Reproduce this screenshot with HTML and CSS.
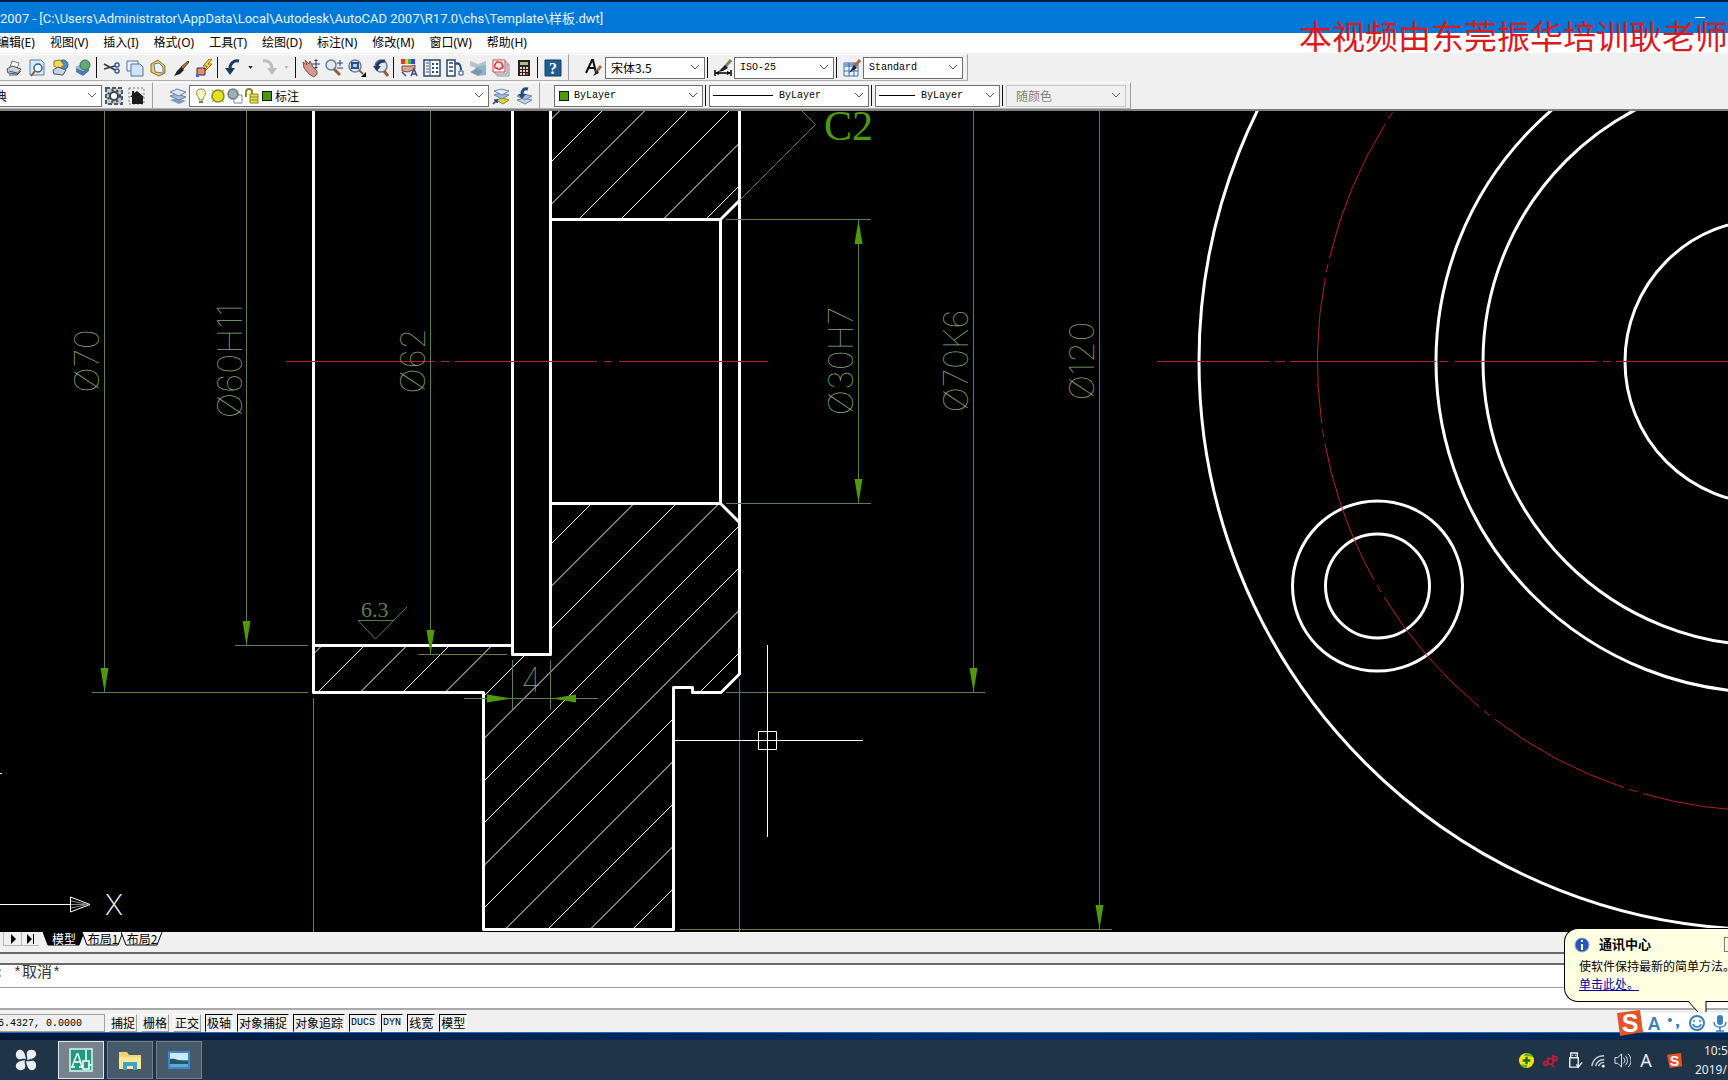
FILE: index.html
```html
<!doctype html>
<html lang="zh-CN">
<head>
<meta charset="UTF-8">
<title>AutoCAD 2007</title>
<link rel="stylesheet" href="styles.css">
</head>
<body>
	<header class="titlebar">
		<h1>2007 - [C:\Users\Administrator\AppData\Local\Autodesk\AutoCAD 2007\R17.0\chs\Template\样板.dwt]</h1>
		<button class="minimize" aria-label="最小化"></button>
	</header>
	<nav class="menubar">
		<button>编辑(E)</button>
		<button>视图(V)</button>
		<button>插入(I)</button>
		<button>格式(O)</button>
		<button>工具(T)</button>
		<button>绘图(D)</button>
		<button>标注(N)</button>
		<button>修改(M)</button>
		<button>窗口(W)</button>
		<button>帮助(H)</button>
	</nav>
	<div class="toolbars">
		<div class="toolrow">
			<div class="band band-standard">
				<button class="tool" aria-label="打印"><svg viewBox="0 0 18 18"><path d="M5 8L7 2l7 2-2 6z" fill="#fff" stroke="#777"/><path d="M2 10l5-3 9 3-4 5-9-1z" fill="#c9d3df" stroke="#4a525c"/><path d="M4 12l8 2M4 16h8l4-4" stroke="#4a525c" fill="none"/></svg></button>
				<button class="tool" aria-label="打印预览"><svg viewBox="0 0 18 18"><path d="M2 1h11l3 3v12H2z" fill="#dbe9f8" stroke="#5b82ab"/><circle cx="10" cy="9" r="4" fill="#eef8ff" stroke="#3d5d80" stroke-width="1.5"/><path d="M7 12l-4 5" stroke="#8c5a2b" stroke-width="2"/></svg></button>
				<button class="tool" aria-label="发布"><svg viewBox="0 0 18 18"><circle cx="12" cy="6" r="5" fill="#4f8fc4" stroke="#2d5d88"/><path d="M3 2l6-1 4 5-5 4-5-3z" fill="#f5d84e" stroke="#9a7b12"/><path d="M2 11l5-3 8 3-3 5-9-1z" fill="#c9d3df" stroke="#4a525c"/></svg></button>
				<button class="tool" aria-label="三维 DWF"><svg viewBox="0 0 18 18"><path d="M1 8l7-3 6 3-6 4z" fill="#8cb4d8"/><circle cx="11" cy="6" r="5" fill="#63ad6a" stroke="#396e7e"/><path d="M2 9v4l7 4 6-5V8l-6 4z" fill="#4c7cae"/></svg></button>
				<span class="sep"></span>
				<button class="tool" aria-label="剪切"><svg viewBox="0 0 18 18"><path d="M1 5l11 6M1 10l11-3" stroke="#333a44" stroke-width="1.5"/><circle cx="14" cy="6" r="2" fill="none" stroke="#3b5b8c" stroke-width="1.5"/><circle cx="14" cy="12" r="2" fill="none" stroke="#3b5b8c" stroke-width="1.5"/></svg></button>
				<button class="tool" aria-label="复制"><svg viewBox="0 0 18 18"><path d="M1 2h11v10H1z" fill="#eaf4ff" stroke="#4b7aa5"/><path d="M5 5h9l3 3v9H5z" fill="#cfe4f8" stroke="#4b7aa5"/></svg></button>
				<button class="tool" aria-label="粘贴"><svg viewBox="0 0 18 18"><path d="M2 5l7-4 7 6v7l-6 3-8-4z" fill="#f0cf62" stroke="#8b6d24"/><path d="M5 5l5-1 4 4v6l-8-1z" fill="#eaf1f8" stroke="#6a7d92"/></svg></button>
				<button class="tool" aria-label="特性匹配"><svg viewBox="0 0 18 18"><path d="M16 2l-7 6 2 2 6-7z" fill="#b77a43" stroke="#55351a"/><path d="M9 8l3 3-4 4-6 2 3-5z" fill="#222"/></svg></button>
				<button class="tool" aria-label="块编辑器"><svg viewBox="0 0 18 18"><path d="M14 0L8 7h4l-3 6 8-8h-4l4-5z" fill="#ffd13a" stroke="#a06a10"/><path d="M2 9h8v7H2z" fill="#f28a5c" stroke="#1c2f66"/><path d="M1 15h3v3H1z" fill="#3b6bd1"/></svg></button>
				<span class="sep"></span>
				<button class="tool" aria-label="放弃"><svg viewBox="0 0 18 18"><path d="M15 2C10 1 6 4 6 10" fill="none" stroke="#1f3866" stroke-width="3"/><path d="M1 9h10l-5 7z" fill="#1f3866"/></svg></button>
				<button class="drop" aria-label="放弃列表"><svg viewBox="0 0 6 4"><path d="M0 0h6L3 4z" fill="#222"/></svg></button>
				<button class="tool" aria-label="重做"><svg viewBox="0 0 18 18"><path d="M3 2c5-1 9 2 9 8" fill="none" stroke="#bdbdbd" stroke-width="3"/><path d="M7 9h10l-5 7z" fill="#bdbdbd"/></svg></button>
				<button class="drop" aria-label="重做列表"><svg viewBox="0 0 6 4"><path d="M0 0h6L3 4z" fill="#bbb"/></svg></button>
				<span class="sep"></span>
				<button class="tool" aria-label="实时平移"><svg viewBox="0 0 18 18"><path d="M1 3l4 3-2-5 4 4 1-3 3 6 4 4v3l-3 3-5-3-5-6z" fill="#d59a8f" stroke="#8b4a43"/><path d="M14 1v8M10 5h8" stroke="#23406f"/><path d="M14 0l2 2h-4zM14 10l2-2h-4z" fill="#23406f"/></svg></button>
				<button class="tool" aria-label="实时缩放"><svg viewBox="0 0 18 18"><circle cx="6" cy="6" r="5" fill="#dceaf6" stroke="#6d7f91" stroke-width="1.5"/><path d="M9 10l6 6" stroke="#9b5c34" stroke-width="3"/><path d="M15 1v6M12 4h6M12 9h6" stroke="#23406f"/></svg></button>
				<button class="tool" aria-label="窗口缩放"><svg viewBox="0 0 18 18"><circle cx="7" cy="7" r="6" fill="#dceaf6" stroke="#6d7f91" stroke-width="1.5"/><path d="M4 4h6v5H4z" fill="#b8cbea" stroke="#23509e" stroke-width="2"/><path d="M11 11l4 4" stroke="#9b5c34" stroke-width="2"/><path d="M18 13v5h-5z" fill="#000"/></svg></button>
				<button class="tool" aria-label="缩放上一个"><svg viewBox="0 0 18 18"><circle cx="10" cy="7" r="6" fill="#dceaf6" stroke="#6d7f91" stroke-width="1.5"/><path d="M14 2C9 2 6 4 6 8" fill="none" stroke="#1f3866" stroke-width="3"/><path d="M2 7h8l-4 5z" fill="#1f3866"/><path d="M13 12l4 5" stroke="#9b5c34" stroke-width="3"/></svg></button>
				<span class="sep"></span>
				<button class="tool" aria-label="特性"><svg viewBox="0 0 18 18"><path d="M1 0h4v5H1z" fill="#e33"/><path d="M5 0h3v5H5z" fill="#fc3"/><path d="M8 0h3v5H8z" fill="#3b5"/><path d="M11 0h4v5h-4z" fill="#34e"/><path d="M2 7h9l4-1v4l-7 3-6-1z" fill="#d8a58e" stroke="#7a4a3a"/><path d="M2 13l4 4M11 17l3-7 3 7M12 15h4" fill="none" stroke="#34527f" stroke-width="1.5"/></svg></button>
				<button class="tool" aria-label="设计中心"><svg viewBox="0 0 18 18"><path d="M1 1h16v16H1z" fill="#fff" stroke="#24487c" stroke-width="1.5"/><path d="M7 1v16" stroke="#24487c"/><path d="M3 4h3M3 7h3M3 10h3M3 13h3" stroke="#24487c"/><path d="M9 4h2v2H9zM13 4h2v2h-2zM9 8h2v2H9zM13 8h2v2h-2zM9 12h2v2H9zM13 12h2v2h-2z" fill="#24487c"/></svg></button>
				<button class="tool" aria-label="工具选项板"><svg viewBox="0 0 18 18"><path d="M1 1h8v16H1z" fill="#fff" stroke="#24487c" stroke-width="1.5"/><path d="M3 4h4M3 8h4M3 12h4" stroke="#24487c" stroke-width="1.5"/><path d="M9 5c4-2 6 1 6 6" fill="none" stroke="#24487c" stroke-width="2"/><path d="M13 12h4v4h-4z" fill="#fff" stroke="#24487c"/></svg></button>
				<button class="tool" aria-label="图纸集"><svg viewBox="0 0 18 18"><path d="M1 2l8 3 8-3v6l-7 2-9-3z" fill="#b9c3ca"/><path d="M6 8l11-2v10l-9 1z" fill="#8fb3c9"/><path d="M1 13l7-4 6 3-5 5z" fill="#7d97a8"/></svg></button>
				<button class="tool" aria-label="标记集"><svg viewBox="0 0 18 18"><path d="M5 5h12v12H5z" fill="#ddd" stroke="#999"/><path d="M3 3h12v12H3z" fill="#eee" stroke="#999"/><path d="M1 1h12v12H1z" fill="#fff" stroke="#c44"/><path d="M4 4c1-2 3-1 3 0 1-2 4 0 3 2 2 1 1 4-1 3-1 2-3 2-4 0-3 1-3-3-1-5z" fill="#fbe3e3" stroke="#d2333b" stroke-width="1.5"/></svg></button>
				<button class="tool" aria-label="计算器"><svg viewBox="0 0 18 18"><path d="M3 1h12v16H3z" fill="#2a1f22"/><path d="M5 3h8v3H5z" fill="#9fc08c"/><path d="M5 8h2v2H5zM8 8h2v2H8zM11 8h2v2h-2zM5 11h2v2H5zM8 11h2v2H8zM11 11h2v2h-2zM5 14h2v2H5zM8 14h2v2H8z" fill="#e3cfd0"/><path d="M11 14h2v2h-2z" fill="#d33"/></svg></button>
				<span class="sep"></span>
				<button class="tool" aria-label="帮助"><svg viewBox="0 0 18 18"><path d="M1 1h16v16H1z" fill="#1f5c93" stroke="#163f66"/><text x="9" y="15" class="glyph-help">?</text></svg></button>
			</div>
			<div class="band band-styles">
				<button class="tool" aria-label="文字样式"><svg viewBox="0 0 18 18"><path d="M1 14L7 1h1l3 13M4 9h6" fill="none" stroke="#111" stroke-width="2"/><path d="M16 7l-5 6" stroke="#a86c4b" stroke-width="3"/><path d="M12 11l2 3-6 3z" fill="#222"/></svg></button>
				<select class="combo combo-style cjk" aria-label="文字样式"><option>宋体3.5</option></select>
				<span class="sep"></span>
				<button class="tool" aria-label="标注样式"><svg viewBox="0 0 18 18"><path d="M17 1l-6 7" stroke="#6c8c5e" stroke-width="3"/><path d="M11 6l3 3-5 3-5 1z" fill="#222"/><path d="M1 11v6M17 11v6M2 14h14" stroke="#000" stroke-width="1.5"/><path d="M1 14l4-2v4zM17 14l-4-2v4z"/></svg></button>
				<select class="combo combo-style" aria-label="标注样式"><option>ISO-25</option></select>
				<span class="sep"></span>
				<button class="tool" aria-label="表格样式"><svg viewBox="0 0 18 18"><path d="M1 4h14v13H1z" fill="#eef5ff" stroke="#3d6cab"/><path d="M1 4h14v4H1z" fill="#7ba2d8"/><path d="M1 12h14M6 4v13M11 4v13" stroke="#3d6cab"/><path d="M17 1l-6 7" stroke="#a86c4b" stroke-width="3"/><path d="M11 6l3 3-8 5z" fill="#222"/></svg></button>
				<select class="combo combo-style" aria-label="表格样式"><option>Standard</option></select>
			</div>
		</div>
		<div class="toolrow">
			<div class="band">
				<select class="combo combo-workspace cjk" aria-label="工作空间"><option>典</option></select>
				<button class="tool" aria-label="工作空间设置"><svg viewBox="0 0 18 18"><path d="M1 1h16v16H1z" fill="#c3cbd3" stroke="#4e5a66" stroke-dasharray="4 2" stroke-width="2"/><circle cx="9" cy="9" r="4" fill="#fff" stroke="#39444f" stroke-width="2"/><circle cx="9" cy="9" r="6" fill="none" stroke="#39444f" stroke-width="2" stroke-dasharray="2 3"/></svg></button>
				<button class="tool" aria-label="我的工作空间"><svg viewBox="0 0 18 18"><path d="M1 1h15v16H1z" fill="none" stroke="#777" stroke-dasharray="2 2"/><path d="M2 10l2-2V4h2v2l3-2 7 6h-1v7H4v-7z" fill="#1c1c1c"/></svg></button>
			</div>
			<div class="band band-layers">
				<button class="tool" aria-label="图层特性管理器"><svg viewBox="0 0 18 18"><path d="M1 13l7-2 9 3-7 3z" fill="#7f9cc0"/><path d="M1 9l7-2 9 3-7 3z" fill="#a7bdd8" stroke="#6482a8"/><path d="M1 5l7-3 9 3-7 4z" fill="#dde8f4" stroke="#6482a8"/></svg></button>
				<div class="layer-combo">
					<select class="combo combo-layer cjk" aria-label="图层"><option>标注</option></select>
					<span class="layer-state">
						<svg viewBox="0 0 16 16"><path d="M8 1c6 0 5 6 2 9v2H6v-2C3 7 2 1 8 1z" fill="#fffbc8" stroke="#8d8a3c"/><path d="M6 13h4v2H6z" fill="#777"/></svg>
						<svg viewBox="0 0 16 16"><circle cx="8" cy="8" r="6" fill="#e6e21e" stroke="#8a8a20" stroke-width="1.5"/><path d="M2 2l2 2M14 2l-2 2M2 14l2-2M14 14l-2-2" stroke="#8a8a20"/></svg>
						<svg viewBox="0 0 16 16"><path d="M7 7h8v8H7z" fill="#fff" stroke="#7a8a94"/><circle cx="6" cy="6" r="5" fill="#9db0b4" stroke="#6b7d84" stroke-width="1.5"/></svg>
						<svg viewBox="0 0 16 16"><path d="M2 9V4c0-4 6-4 6 0v3" fill="none" stroke="#8d8a1c" stroke-width="2"/><path d="M6 6h8v9H6z" fill="#e8e04a" stroke="#8d8a1c"/><path d="M6 9h8M6 12h8" stroke="#8d8a1c"/></svg>
						<i class="swatch"></i>
					</span>
				</div>
				<button class="tool" aria-label="置为当前图层"><svg viewBox="0 0 18 18"><path d="M4 13l6-2 7 2-6 4z" fill="#e1d433" stroke="#8a8420"/><path d="M2 8l7-2 8 2-7 4z" fill="#a7bdd8" stroke="#6482a8"/><path d="M2 4l7-2 8 2-7 4z" fill="#e8eef5" stroke="#6482a8"/><path d="M1 17l4-4M2 13h3v3" fill="none" stroke="#223c8a" stroke-width="1.5"/></svg></button>
				<button class="tool" aria-label="上一个图层"><svg viewBox="0 0 18 18"><path d="M2 13l7-2 8 2-7 4z" fill="#c9d6e6" stroke="#6482a8"/><path d="M2 9l7-2 8 2-7 4z" fill="#a7bdd8" stroke="#6482a8"/><path d="M13 2C9 1 7 3 7 7" fill="none" stroke="#294b7c" stroke-width="3"/><path d="M3 7h8l-4 5z" fill="#294b7c"/></svg></button>
			</div>
			<div class="band band-props">
				<div class="layer-combo">
					<select class="combo combo-color" aria-label="颜色"><option>ByLayer</option></select>
					<span class="layer-state"><i class="swatch"></i></span>
				</div>
				<span class="sep"></span>
				<div class="layer-combo">
					<select class="combo combo-linetype" aria-label="线型"><option>ByLayer</option></select>
					<span class="layer-state"><i class="sample sample-long"></i></span>
				</div>
				<span class="sep"></span>
				<div class="layer-combo">
					<select class="combo combo-weight" aria-label="线宽"><option>ByLayer</option></select>
					<span class="layer-state"><i class="sample"></i></span>
				</div>
				<span class="sep"></span>
				<select class="combo combo-plot cjk" aria-label="打印样式" disabled><option>随颜色</option></select>
			</div>
		</div>
	</div>

	<main class="drawing">
		<svg class="canvas" viewBox="0 111 1728 821" preserveAspectRatio="xMinYMin slice">
			<defs>
				<clipPath id="section">
					<path d="M550 111H739V200L720 219H550zM313 645H512V654H550V503H720L739 522V674L721 692H693V687H673V929H483V692H313z"/>
				</clipPath>
				<!-- tip at 0,0 pointing down -->
				<path id="arrow" d="M0 0L-4 -24H4z"/>
			</defs>

			<path class="hatch" clip-path="url(#section)" d="M-261.5 932l821-821M-219 932l821-821M-176.5 932l821-821M-134 932l821-821M-92 932l821-821M-49.5 932l821-821M-7 932l821-821M35.5 932l821-821M78 932l821-821M120.5 932l821-821M163 932l821-821M205.5 932l821-821M248 932l821-821M290.5 932l821-821M333 932l821-821M375 932l821-821M417.5 932l821-821M460 932l821-821M502.5 932l821-821M545 932l821-821M587.5 932l821-821M630 932l821-821"/>

			<!-- section outline -->
			<g class="outline">
				<path d="M313.5 111V692.5H483.5V929.5H673.5V687.5H692.5V692.5H721L739.5 674V111"/>
				<path d="M313.5 645.5H512.5M512.5 111V654.5H550.5V111"/>
				<path d="M550.5 219.5H720.5V503.5H550.5M720.5 219.5L739.5 200.5M720.5 503.5L739.5 522.5"/>
			</g>

			<!-- front view -->
			<g class="outline">
				<circle cx="1767" cy="361.5" r="568"/>
				<circle cx="1767" cy="361.5" r="331"/>
				<circle cx="1767" cy="361.5" r="284"/>
				<circle cx="1767" cy="361.5" r="142"/>
				<circle cx="1377.5" cy="586" r="85"/>
				<circle cx="1377.5" cy="586" r="52"/>
			</g>

			<g class="center">
				<path d="M286 361.5H435M441 361.5H449M455 361.5H597M604 361.5H612M619 361.5H768"/>
				<path d="M1157 361.5H1270M1275 361.5H1285M1290 361.5H1436M1440 361.5H1448M1455 361.5H1597M1603 361.5H1611M1616 361.5H1728"/>
				<path class="pitch" d="M1504.7 -3.6A449.5 449.5 0 0 0 1767 811"/>
			</g>

			<g class="dim">
				<path d="M104.5 111V692M92 692.5H308"/>
				<path d="M246.5 111V645M235 645.5H308"/>
				<path d="M430.5 111V654M418 654.5H507"/>
				<path d="M858.5 219V503M726 219.5H871M726 503.5H871"/>
				<path d="M973.5 111V692M726 692.5H985"/>
				<path d="M1099.5 111V929M680 929.5H1112"/>
				<path d="M313.5 698V932M739.5 679V932"/>
				<path d="M512.5 660V710M550.5 660V710M464 698.5H598"/>
				<path d="M740 200L815.5 124.5L802 111"/>
				<path d="M358 620.5H394M358 620.5L375.5 639L407 607"/>
			</g>
			<g class="arrows">
				<use href="#arrow" x="104.5" y="692"/>
				<use href="#arrow" x="246.5" y="645"/>
				<use href="#arrow" x="430.5" y="654"/>
				<use href="#arrow" x="858.5" y="503"/>
				<use href="#arrow" transform="translate(858.5 220) rotate(180)"/>
				<use href="#arrow" x="973.5" y="692"/>
				<use href="#arrow" x="1099.5" y="929"/>
				<use href="#arrow" transform="translate(511 698.5) rotate(-90)"/>
				<use href="#arrow" transform="translate(552 698.5) rotate(90)"/>
			</g>
			<g class="dimtext">
				<text transform="translate(99 361) rotate(-90)">Ø70</text>
				<text transform="translate(242 361) rotate(-90)">Ø60H11</text>
				<text transform="translate(425 361) rotate(-90)">Ø62</text>
				<text transform="translate(853 361) rotate(-90)">Ø30H7</text>
				<text transform="translate(968 361) rotate(-90)">Ø70K6</text>
				<text transform="translate(1094 361) rotate(-90)">Ø120</text>
				<text x="531" y="692">4</text>
			</g>
			<text class="note" x="824" y="140">C2</text>
			<text class="rough" x="361" y="617">6.3</text>

			<!-- UCS icon -->
			<g class="ucs">
				<path d="M0 904.5H70M0 773.5H2M70.5 897V912L90 904.5z"/>
				<path class="ucs-shade" d="M71 901L88 904.5L71 908M71 904.5H88"/>
				<text x="114" y="915">X</text>
			</g>

			<path class="cursor" d="M767.5 645V837M672 740.5H863M758.5 731.5H776.5V749.5H758.5z"/>
		</svg>
	</main>

	<div class="tabs">
		<button class="tab-nav" aria-label="下一个"><svg viewBox="0 0 8 10"><path d="M2 0l5 5-5 5z"/></svg></button>
		<button class="tab-nav" aria-label="最后一个"><svg viewBox="0 0 8 10"><path d="M0 0l5 5-5 5zM6 0h1v10H6z"/></svg></button>
		<button class="tab active"><svg viewBox="0 0 42 14"><path d="M0 0l5 13h31l5-13"/></svg><span>模型</span></button>
		<button class="tab"><svg viewBox="0 0 42 14"><path d="M0 0l5 13h31l5-13"/></svg><span>布局1</span></button>
		<button class="tab"><svg viewBox="0 0 42 14"><path d="M0 0l5 13h31l5-13"/></svg><span>布局2</span></button>
	</div>
	<div class="splitter"></div>
	<div class="history">: *取消*</div>
	<input class="command" type="text" aria-label="命令">

	<footer class="status">
		<output class="coords">5.4327, 0.0000</output>
		<button class="mode">捕捉</button>
		<button class="mode">栅格</button>
		<button class="mode">正交</button>
		<button class="mode on">极轴</button>
		<button class="mode on">对象捕捉</button>
		<button class="mode on">对象追踪</button>
		<button class="mode on latin">DUCS</button>
		<button class="mode on latin">DYN</button>
		<button class="mode on">线宽</button>
		<button class="mode on">模型</button>
	</footer>
	<div class="desktop-edge"></div>

	<div class="taskbar">
		<button class="start" aria-label="开始"><svg viewBox="0 0 22 22"><g fill="#e9eff4"><path d="M11 10C10 4 8 0 4 1 0 2 0 8 3 10c3 1 4-1 8 0z"/><path d="M12 11c6-1 10-3 9-7-1-4-7-4-9-1-1 3 1 4 0 8z"/><path d="M11 12c1 6 3 10 7 9 4-1 4-7 1-9-3-1-4 1-8 0z"/><path d="M10 11c-6 1-10 3-9 7 1 4 7 4 9 1 1-3-1-4 0-8z"/></g></svg></button>
		<button class="task current" aria-label="AutoCAD"><svg viewBox="0 0 24 24"><path d="M1 1h22v22H1z" fill="#1f9b83" stroke="#dff3ee" stroke-width="1.5"/><path d="M2 19h4M3 19L8 6h1l4 13h-3M5 14h6M17 2v11M14 13h6v8h-6zM20 17h3" fill="none" stroke="#fff" stroke-width="1.5"/></svg></button>
		<button class="task" aria-label="文件资源管理器"><svg viewBox="0 0 24 24"><path d="M1 4h8l2 3h12v14H1z" fill="#f6d36b"/><path d="M1 9h22v12H1z" fill="#fbe596"/><path d="M5 22v-8h14v8h-4v-4H9v4z" fill="#3da4c7"/></svg></button>
		<button class="task" aria-label="照片查看器"><svg viewBox="0 0 24 24"><path d="M1 3h22v18H1z" fill="#3f86c9"/><path d="M3 5h18v7H3z" fill="#cfe9fb"/><path d="M3 11c6-1 9 3 18 2v6H3z" fill="#1f5a63"/><path d="M3 16h18v3H3z" fill="#5fa9d4"/></svg></button>
		<div class="tray">
			<button aria-label="安全卫士"><svg viewBox="0 0 18 18"><circle cx="9" cy="9" r="8" fill="#f2e21a"/><path d="M9 1a8 8 0 0 1 7 4L6 4zM9 17a8 8 0 0 1-7-4l8 1z" fill="#5cae2c"/><path d="M9 5v8M5 9h8" stroke="#167016" stroke-width="2.5"/></svg></button>
			<button aria-label="同步"><svg viewBox="0 0 18 18"><g fill="none" stroke="#b3203f" stroke-width="2"><circle cx="9" cy="10" r="3"/><circle cx="4" cy="12" r="2"/><circle cx="14" cy="7" r="2"/><path d="M5 6l3 1M12 3l-1 3M11 14l2 2"/></g></svg></button>
			<button aria-label="安全删除硬件"><svg viewBox="0 0 18 18"><path d="M5 6V1h7v5M4 6h9v10H4zM7 3v1M10 3v1" fill="none" stroke="#e8edf1" stroke-width="1.5"/><path d="M11 13l2 3 4-5" fill="none" stroke="#e8edf1" stroke-width="1.5"/></svg></button>
			<button aria-label="无线网络"><svg viewBox="0 0 18 18"><path d="M2 15C3 8 8 4 15 4M6 15c1-4 4-7 9-7M9 15c1-2 3-4 6-4" fill="none" stroke="#c4ced6" stroke-width="1.5"/><circle cx="14" cy="15" r="1.5" fill="#fff"/></svg></button>
			<button aria-label="音量"><svg viewBox="0 0 18 18"><path d="M1 6h3l4-4v14l-4-4H1zM10 6c2 2 2 4 0 6M12 4c3 3 3 7 0 10M15 2c4 4 4 10 0 14" fill="none" stroke="#e8edf1"/></svg></button>
			<button class="ime">A</button>
			<button aria-label="搜狗输入法"><svg viewBox="0 0 18 18"><path d="M1 3l15-2 1 14-13 2z" fill="#e5532a"/><text x="9" y="15" class="glyph-s">S</text></svg></button>
			<div class="clock"><span class="time">10:5</span><span>2019/</span></div>
		</div>
	</div>

	<aside class="balloon">
		<svg class="info" viewBox="0 0 16 16"><circle cx="8" cy="8" r="7" fill="#2b55b4" stroke="#8fa6d6"/><path d="M7 7h2v6H7zM7 3h2v2H7z" fill="#fff"/></svg>
		<h2>通讯中心</h2>
		<button class="balloon-close" aria-label="关闭"></button>
		<p>使软件保持最新的简单方法。<br><a href="#">单击此处。</a></p>
		<svg class="tail" viewBox="0 0 20 13"><path d="M0 0H18V12H10z" fill="#ffffe1"/><path d="M0 1L10 12M18 1V12" fill="none" stroke="#000"/></svg>
	</aside>

	<div class="ime-bar">
		<svg class="ime-logo" viewBox="0 0 28 28"><path d="M1 4l23-3 3 22-23 4z" fill="#e5532a"/><text x="14" y="23" class="glyph-s-big">S</text></svg>
		<span class="ime-mode">A</span>
		<svg viewBox="0 0 18 18"><circle cx="5" cy="6" r="2" fill="#3a7fb8"/><path d="M11 10h3c1 3-1 5-3 5 1-1 1-2 0-5z" fill="#3a7fb8"/></svg>
		<svg viewBox="0 0 18 18"><circle cx="9" cy="9" r="7" fill="none" stroke="#3a7fb8" stroke-width="2"/><path d="M6 6v2M12 6v2M5 10c1 4 7 4 8 0" fill="none" stroke="#3a7fb8" stroke-width="1.5"/></svg>
		<svg viewBox="0 0 18 18"><rect x="6" y="1" width="6" height="10" rx="3" fill="#3a7fb8"/><path d="M3 8c0 7 12 7 12 0M9 13v4M5 17h8" fill="none" stroke="#3a7fb8" stroke-width="1.5"/></svg>
	</div>

	<div class="watermark">本视频由东莞振华培训耿老师</div>
</body>
</html>
```
FILE: styles.css
```css
* {
	box-sizing: border-box;
}
body {
	margin: 0;
	height: 100vh;
	display: flex;
	flex-direction: column;
	overflow: hidden;
	position: relative;
	background: #f0f0f0;
	color: #000;
	font-family: "Noto Sans", "Noto Sans CJK SC", sans-serif;
	font-size: 12px;
}
button {
	margin: 0;
	padding: 0;
	border: 0;
	background: none;
	color: inherit;
	font: inherit;
	flex: none;
}
svg {
	display: block;
}

/* title and menu */
.titlebar {
	flex: none;
	height: 33px;
	border-top: 2px solid #03204a;
	background: #0078d7;
	color: #e6f5ff;
	display: flex;
	align-items: center;
	justify-content: space-between;
	padding-right: 23px;
}
.titlebar h1 {
	margin: 0;
	font-family: Roboto, "Noto Sans CJK SC", sans-serif;
	font-size: 13px;
	font-weight: normal;
	white-space: nowrap;
}
.minimize {
	width: 10px;
	height: 1px;
	background: #fff;
}
.menubar {
	flex: none;
	height: 20px;
	background: #fff;
	display: flex;
	align-items: center;
	gap: 15px;
	overflow: hidden;
	margin-left: -3px;
}
.menubar button {
	white-space: nowrap;
	line-height: 18px;
}

/* toolbars */
.toolbars {
	flex: none;
	border-bottom: 2px solid #808080;
}
.toolrow {
	display: flex;
	height: 28px;
	padding-top: 1px;
}
.band {
	display: flex;
	align-items: center;
	padding-right: 4px;
	border-top: 1px solid #fff;
	border-right: 1px solid #a0a0a0;
	border-bottom: 1px solid #b0b0b0;
}
.band-standard {
	padding-left: 2px;
}
.band-styles {
	padding-left: 13px;
}
.band-layers {
	padding-left: 13px;
}
.band-props {
	padding-left: 14px;
}
.tool {
	width: 23px;
	height: 22px;
	display: flex;
	align-items: center;
	justify-content: center;
}
.tool svg {
	width: 18px;
	height: 18px;
}
.drop {
	width: 13px;
	height: 22px;
	display: flex;
	align-items: center;
	justify-content: center;
}
.drop svg {
	width: 5px;
	height: 3px;
}
.sep {
	flex: none;
	width: 6px;
	height: 21px;
	border-left: 2px solid transparent;
	border-right: 3px solid transparent;
	background: #111;
	background-clip: padding-box;
}
.combo {
	appearance: none;
	height: 22px;
	margin: 0;
	padding: 0 20px 0 5px;
	border: 1px solid #6f6f6f;
	border-radius: 0;
	background: #fff url("data:image/svg+xml,%3Csvg xmlns='http://www.w3.org/2000/svg' width='10' height='6'%3E%3Cpath d='M1 0l4 4 4-4' fill='none' stroke='%23555'/%3E%3C/svg%3E") no-repeat right 4px center;
	color: #000;
	font-family: "Liberation Mono", monospace;
	font-size: 10px;
}
.combo.cjk {
	font-family: "Noto Sans CJK SC", sans-serif;
	font-size: 12px;
}
.combo:disabled {
	border-color: #c8c8c8;
	background-color: #f0f0f0;
	color: #808080;
	opacity: 1;
	padding-left: 9px;
}
.combo-style {
	width: 100px;
}
.combo-workspace {
	width: 102px;
	border-left: 0;
	padding-left: 0;
	text-indent: -5px;
}
.combo-layer {
	width: 300px;
	padding-left: 85px;
}
.combo-color {
	width: 149px;
	padding-left: 19px;
}
.combo-linetype {
	width: 160px;
	padding-left: 69px;
}
.combo-weight {
	width: 125px;
	padding-left: 45px;
}
.combo-plot {
	width: 120px;
}
.layer-combo {
	display: grid;
	align-items: center;
}
.layer-combo > * {
	grid-area: 1 / 1;
}
.layer-state {
	display: flex;
	align-items: center;
	gap: 1px;
	padding-left: 4px;
	pointer-events: none;
}
.layer-state svg {
	width: 16px;
	height: 16px;
}
.swatch {
	width: 10px;
	height: 10px;
	margin-left: 1px;
	border: 1px solid #111;
	background: #4e9a06;
}
.sample {
	width: 36px;
	height: 1px;
	background: #000;
}
.sample-long {
	width: 60px;
}
.glyph-help {
	font: bold 16px "Liberation Serif", serif;
	fill: #fff;
	text-anchor: middle;
}

/* drawing area */
.drawing {
	flex: 1;
	min-height: 0;
	background: #000;
}
.canvas {
	width: 100%;
	height: 100%;
}
.canvas path,
.canvas circle {
	fill: none;
}
.outline {
	stroke: #fff;
	stroke-width: 3;
	stroke-linejoin: round;
}
.hatch {
	stroke: #fff;
	stroke-width: 1;
}
.center {
	stroke: #b5202c;
	stroke-width: 1;
}
.pitch {
	stroke-dasharray: 8 6 146 6;
	stroke-dashoffset: 4;
}
.dim {
	stroke: #5c7f4c;
	stroke-width: 1;
}
.arrows {
	fill: #4e9a0a;
}
.canvas #arrow {
	fill: inherit;
}
.dimtext {
	fill: #86a873;
	font: 100 34px Inter, "Noto Sans", sans-serif;
	text-anchor: middle;
}
.note {
	fill: #4e9a0a;
	font: 42px "Liberation Serif", serif;
}
.rough {
	fill: #5c7f4c;
	font: 22px "Liberation Serif", serif;
}
.ucs {
	stroke: #fff;
}
.ucs-shade {
	stroke: #888;
}
.ucs text {
	stroke: none;
	fill: #fff;
	font: 200 28px Inter, "Noto Sans", sans-serif;
	text-anchor: middle;
}
.cursor {
	stroke: #fff;
}

/* layout tabs and command line */
.tabs {
	flex: none;
	height: 22px;
	display: flex;
	align-items: flex-start;
	border-bottom: 2px solid #696969;
	padding-left: 3px;
}
.tab-nav {
	width: 18px;
	height: 14px;
	display: flex;
	align-items: center;
	justify-content: center;
	border: 1px solid #b5b5b5;
	border-top: 0;
	border-right: 0;
}
.tab-nav svg {
	width: 8px;
	height: 10px;
}
.tab {
	width: 42px;
	height: 14px;
	display: grid;
	justify-items: center;
	font-family: "Noto Sans CJK SC", sans-serif;
	line-height: 13px;
}
.tab > * {
	grid-area: 1 / 1;
}
.tab-nav + .tab {
	margin-left: 4px;
}
.tab + .tab {
	margin-left: -3px;
}
.tab svg {
	width: 42px;
	height: 14px;
	fill: #f4f4f4;
	stroke: #000;
}
.tab.active {
	color: #fff;
}
.tab.active svg {
	fill: #000;
}
.splitter {
	flex: none;
	height: 11px;
	border-bottom: 2px solid #696969;
}
.history {
	flex: none;
	height: 23px;
	background: #fff;
	border-bottom: 1px solid #a0a0a0;
	color: #333;
	font-family: "Liberation Mono", "Noto Sans CJK SC", monospace;
	font-size: 15px;
	line-height: 18px;
	text-indent: -5px;
}
.command {
	flex: none;
	width: 100%;
	height: 22px;
	margin: 0;
	padding: 0 4px;
	border: 0;
	border-bottom: 2px solid #a9a9a9;
	border-radius: 0;
	background: #fff;
}

/* status bar */
.status {
	flex: none;
	height: 22px;
	display: flex;
	align-items: center;
	gap: 4px;
	padding-top: 4px;
}
.coords {
	width: 105px;
	height: 18px;
	border: 1px solid #a0a0a0;
	border-left: 0;
	font-family: "Liberation Mono", monospace;
	font-size: 10px;
	line-height: 17px;
	text-indent: -2px;
}
.mode {
	height: 18px;
	padding: 0 1px;
	border: 1px solid #fff;
	border-right-color: #a0a0a0;
	border-bottom-color: #a0a0a0;
	font-family: "Noto Sans CJK SC", sans-serif;
	line-height: 16px;
}
.mode.on {
	border-color: #000 #fff #fff #000;
}
.mode.latin {
	font-family: "Liberation Mono", monospace;
	font-size: 10px;
}
.desktop-edge {
	flex: none;
	height: 8px;
	border-top: 1px solid #1a6fc0;
	background: linear-gradient(90deg, #02183a, #03306c 60%, #022450);
}

/* taskbar */
.taskbar {
	flex: none;
	height: 40px;
	display: flex;
	align-items: center;
	background: #1f3447;
	color: #e8edf1;
}
.start {
	width: 52px;
	margin-right: 6px;
	display: flex;
	justify-content: center;
}
.start svg {
	width: 22px;
	height: 22px;
}
.task {
	width: 46px;
	height: 38px;
	margin-right: 3px;
	display: flex;
	align-items: center;
	justify-content: center;
	background: #475a69;
	border: 1px solid #71818d;
}
.task svg {
	width: 24px;
	height: 24px;
}
.task.current {
	background: #77838c;
	border-color: #e0e6ea;
}
.tray {
	margin-left: auto;
	display: flex;
	align-items: center;
}
.tray button {
	width: 24px;
	display: flex;
	justify-content: center;
}
.tray svg {
	width: 17px;
	height: 17px;
}
.tray .ime {
	font-size: 18px;
	margin-right: 4px;
}
.clock {
	width: 42px;
	padding-left: 9px;
	overflow: hidden;
	font-size: 12px;
	line-height: 19px;
}
.clock span {
	display: block;
}
.clock .time {
	padding-left: 9px;
}
.glyph-s {
	font: bold 15px "Liberation Sans", sans-serif;
	fill: #fff;
	text-anchor: middle;
}
.glyph-s-big {
	font: bold 25px "Liberation Sans", sans-serif;
	fill: #fff;
	text-anchor: middle;
}

/* floating over the window */
.balloon {
	position: absolute;
	right: 0;
	bottom: 78px;
	width: 164px;
	height: 74px;
	padding: 8px 0 0 9px;
	display: grid;
	grid-template-columns: 16px 1fr 4px;
	column-gap: 9px;
	align-content: start;
	background: #ffffe1;
	border: 1px solid #000;
	border-right: 0;
	border-radius: 14px 0 0 14px;
	font-family: "Noto Sans CJK SC", sans-serif;
}
.info {
	width: 16px;
	height: 16px;
}
.balloon h2 {
	margin: 0;
	font-size: 13px;
	line-height: 14px;
}
.balloon-close {
	height: 15px;
	border: 1px solid #777;
	border-right: 0;
}
.balloon p {
	grid-column: 1 / -1;
	margin: 4px 0 0 5px;
	line-height: 18px;
	white-space: nowrap;
}
.balloon a {
	color: #0000b0;
}
.tail {
	position: absolute;
	right: 20px;
	top: 71px;
	width: 20px;
	height: 13px;
}
.ime-bar {
	position: absolute;
	right: 0;
	bottom: 48px;
	height: 19px;
	width: 98px;
	padding-left: 18px;
	display: flex;
	align-items: center;
	gap: 5px;
	background: #fff;
	color: #3a7fb8;
}
.ime-bar svg {
	flex: none;
	width: 18px;
	height: 18px;
}
.ime-bar .ime-logo {
	position: absolute;
	left: -14px;
	top: -4px;
	width: 28px;
	height: 28px;
}
.ime-mode {
	width: 16px;
	font-size: 18px;
	line-height: 18px;
	font-weight: 600;
	text-align: center;
}
.watermark {
	position: absolute;
	right: 0;
	top: 20px;
	font-family: "Liberation Serif", "Noto Sans CJK SC", serif;
	font-size: 33px;
	line-height: 36px;
	color: #dc1a1e;
	white-space: nowrap;
}
```
